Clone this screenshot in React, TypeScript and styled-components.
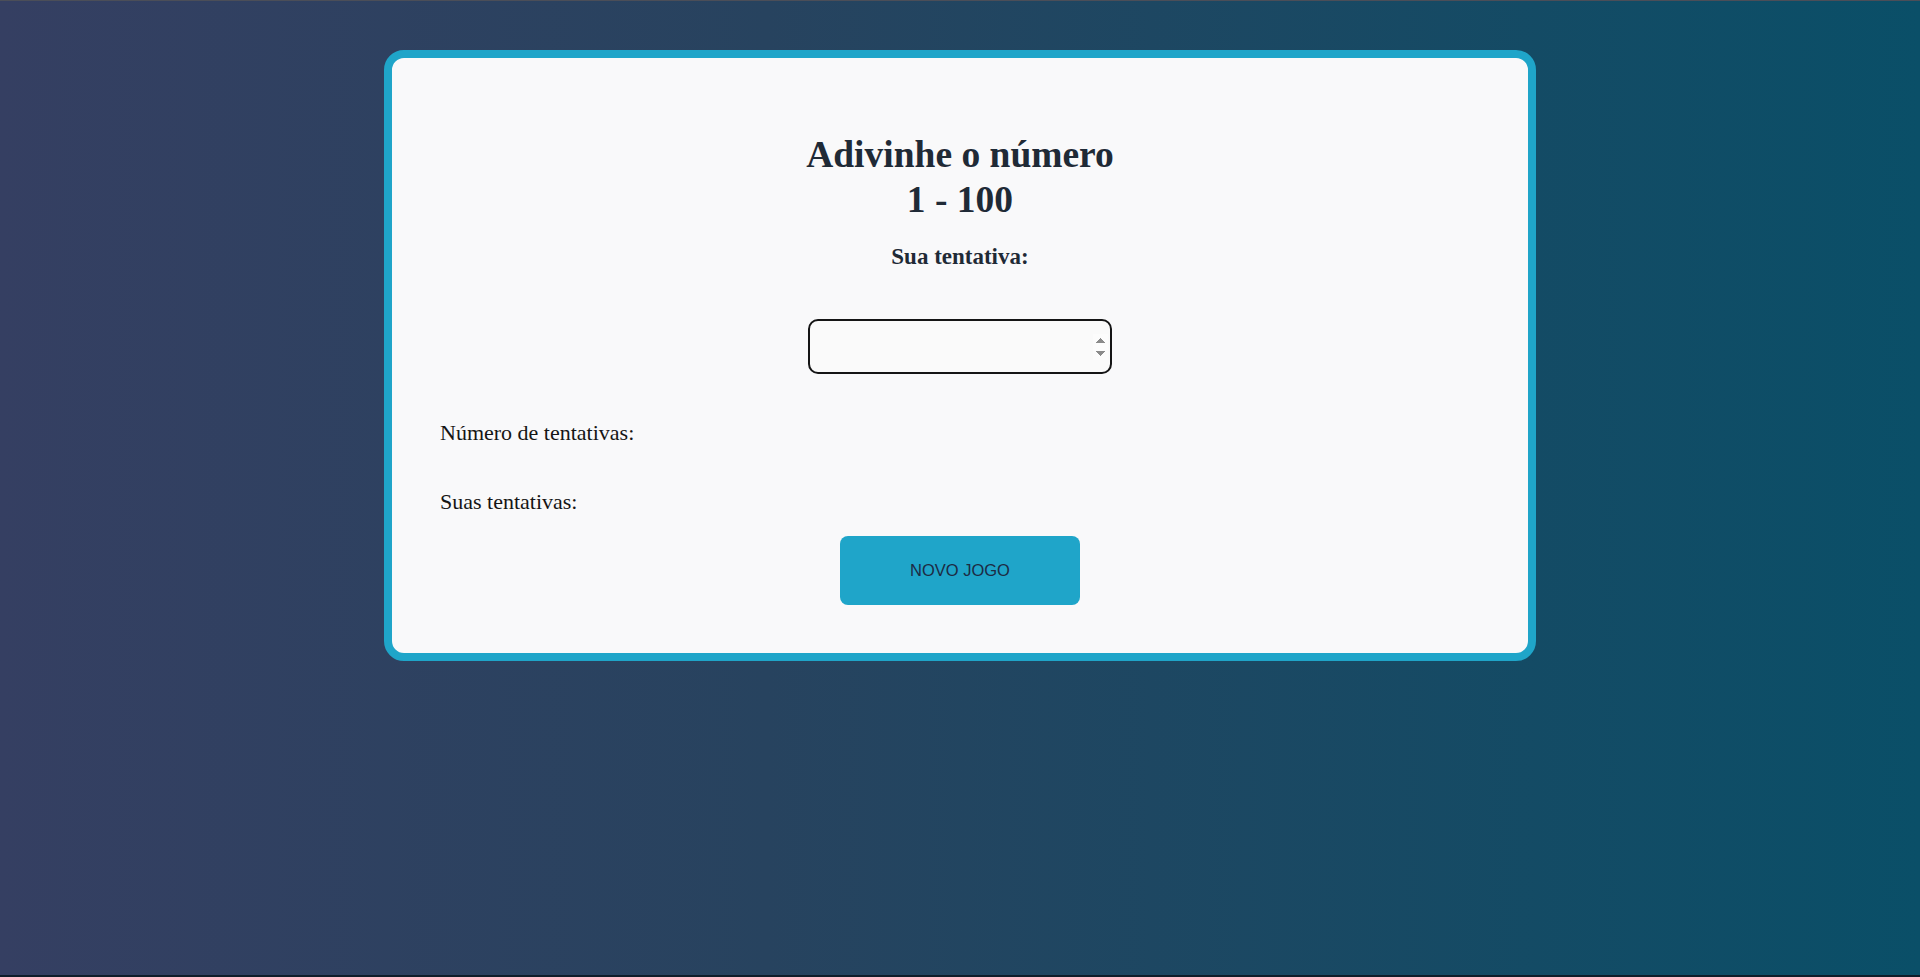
import React from 'react';
import styled, { createGlobalStyle } from 'styled-components';

const GlobalStyle = createGlobalStyle`
  html, body {
    margin: 0;
    padding: 0;
  }

  body {
    font-family: "Liberation Serif", "Times New Roman", serif;
    background: #0f1d2a;
  }
`;

const App: React.FC = () => {
  return (
    <>
      <GlobalStyle />
      <Page>
        <Card>
          <Title>
            Adivinhe o número
            <br />
            1 - 100
          </Title>
          <Label>Sua tentativa:</Label>
          <GuessInput type="number" min={1} max={100} autoFocus />
          <Info>Número de tentativas:</Info>
          <Info $gap={43}>Suas tentativas:</Info>
          <NewGameButton>NOVO JOGO</NewGameButton>
        </Card>
      </Page>
    </>
  );
};

const Page = styled.div`
  box-sizing: border-box;
  height: 975px;
  border-top: 1px solid #4b4e58;
  background: linear-gradient(to right, #353f62 0%, #27435f 40%, #0a4f68 100%);
  padding-top: 49px;
`;

const Card = styled.div`
  box-sizing: border-box;
  width: 1152px;
  margin: 0 auto;
  background: #f9f9fa;
  border: 8px solid #1fa5c9;
  border-radius: 20px;
  padding: 74px 48px 48px;
  display: flex;
  flex-direction: column;
  align-items: center;
`;

const Title = styled.h1`
  margin: 0;
  font-size: 37.5px;
  line-height: 45px;
  font-weight: 700;
  text-align: center;
  color: #1f2a36;
`;

const Label = styled.h3`
  margin: 21px 0 0;
  font-size: 23px;
  line-height: 28px;
  font-weight: 700;
  color: #1f2a36;
`;

const GuessInput = styled.input`
  box-sizing: border-box;
  margin-top: 48px;
  width: 304px;
  height: 55px;
  border: 2.5px solid #151515;
  border-radius: 10px;
  background: #fafafa;
  font-family: "Liberation Sans", Arial, sans-serif;
  font-size: 22px;
  text-align: center;
  padding: 0 2px 0 12px;
  caret-color: #000;
  outline: none;

  &::-webkit-inner-spin-button {
    opacity: 1;
  }
`;

const Info = styled.p<{ $gap?: number }>`
  align-self: stretch;
  margin: ${(p) => p.$gap ?? 46}px 0 0;
  font-size: 22px;
  line-height: 26px;
  color: #151515;
`;

const NewGameButton = styled.button`
  margin-top: 21px;
  width: 240px;
  height: 69px;
  background: #1fa5c9;
  border: none;
  border-radius: 8px;
  font-family: "Liberation Sans", Arial, sans-serif;
  font-size: 16.5px;
  color: #1d2b44;
  cursor: pointer;
`;

export default App;
